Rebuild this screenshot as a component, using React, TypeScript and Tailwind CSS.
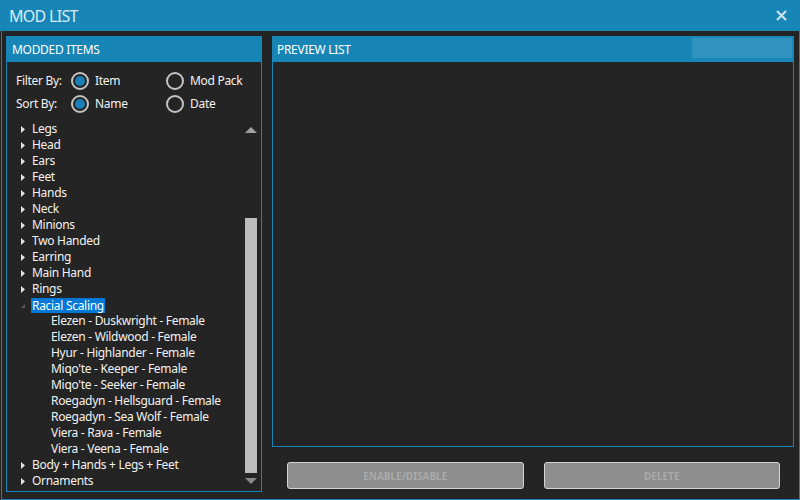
import React from 'react';

const BLUE = 'bg-[#1785b6]';

type RadioProps = { checked: boolean; label: string };

const Radio = ({ checked, label }: RadioProps) => (
  <div className="flex items-center gap-[6px]">
    <span className="flex h-[18px] w-[18px] shrink-0 items-center justify-center rounded-full border-2 border-[#c4c4c4]">
      {checked && <span className="h-[10px] w-[10px] rounded-full bg-[#1a7fb6]" />}
    </span>
    <span>{label}</span>
  </div>
);

const Collapsed = () => (
  <svg width="4" height="7" viewBox="0 0 4 7" className="shrink-0">
    <polygon points="0,0 4,3.5 0,7" fill="#e4e4e4" />
  </svg>
);

const Expanded = () => (
  <svg width="4" height="7" viewBox="0 0 4 7" className="shrink-0">
    <polygon points="4,2 4,6 0,6" fill="#5c5c5c" />
  </svg>
);

const topItems = ['Legs', 'Head', 'Ears', 'Feet', 'Hands', 'Neck', 'Minions', 'Two Handed', 'Earring', 'Main Hand', 'Rings'];

const racial = [
  'Elezen - Duskwright - Female',
  'Elezen - Wildwood - Female',
  'Hyur - Highlander - Female',
  "Miqo'te - Keeper - Female",
  "Miqo'te - Seeker - Female",
  'Roegadyn - Hellsguard - Female',
  'Roegadyn - Sea Wolf - Female',
  'Viera - Rava - Female',
  'Viera - Veena - Female',
];

const bottomItems = ['Body + Hands + Legs + Feet', 'Ornaments'];

const TreeRow = ({ label }: { label: string }) => (
  <div className="flex h-4 items-center gap-[7px] pl-[14px]">
    <Collapsed />
    <span>{label}</span>
  </div>
);

export default function App() {
  return (
    <div className="flex h-[500px] w-[800px] flex-col bg-[#242424] font-['Noto_Sans',sans-serif] text-[12px] leading-4 tracking-[-0.3px] text-[#f2f2f2]">
      {/* title bar */}
      <div className={`flex h-[31px] shrink-0 items-center justify-between pl-[9px] pr-[13px] ${BLUE}`}>
        <span className="text-[16px] tracking-[-0.7px] text-[#dcedf6]">MOD LIST</span>
        <svg width="11" height="11" viewBox="0 0 11 11">
          <path d="M1 1 L10 10 M10 1 L1 10" stroke="#cfe6f2" strokeWidth="2" />
        </svg>
      </div>

      <div className="ml-[1px] flex min-h-0 flex-1 gap-[10px] border-x border-b border-[#1785b6] pb-[7px] pl-[4px] pr-[5px] pt-[5px]">
        {/* left panel */}
        <div className="flex w-[256px] shrink-0 flex-col border border-[#1785b6] bg-[#242424]">
          <div className={`flex h-[25px] shrink-0 items-center pl-[5px] text-white ${BLUE}`}>MODDED ITEMS</div>

          <div className="grid grid-cols-[55px_95px_1fr] grid-rows-[18px_18px] items-center gap-y-[5px] pl-[9px] pt-[10px]">
            <span>Filter By:</span>
            <Radio checked label="Item" />
            <Radio checked={false} label="Mod Pack" />
            <span>Sort By:</span>
            <Radio checked label="Name" />
            <Radio checked={false} label="Date" />
          </div>

          <div className="mt-[8px] flex min-h-0 flex-1">
            <div className="flex-1">
              {topItems.map((t) => (
                <TreeRow key={t} label={t} />
              ))}
              <div className="flex h-4 items-center gap-[6px] pl-[14px]">
                <Expanded />
                <span className="bg-[#0078d7] px-[1px] leading-[15px] text-white">Racial Scaling</span>
              </div>
              {racial.map((r) => (
                <div key={r} className="h-4 pl-[44px]">
                  {r}
                </div>
              ))}
              {bottomItems.map((t) => (
                <TreeRow key={t} label={t} />
              ))}
            </div>

            {/* scrollbar */}
            <div className="mr-[4px] flex w-[12px] flex-col items-center">
              <svg width="12" height="6" viewBox="0 0 12 6" className="mt-[6px]">
                <polygon points="6,0 12,6 0,6" fill="#a0a0a0" />
              </svg>
              <div className="mt-[85px] h-[255px] w-[12px] bg-[#bdbdbd]" />
              <svg width="12" height="6" viewBox="0 0 12 6" className="mt-[5px]">
                <polygon points="0,0 12,0 6,6" fill="#8a8a8a" />
              </svg>
            </div>
          </div>
        </div>

        {/* right column */}
        <div className="flex min-w-0 flex-1 flex-col">
          <div className="flex h-[411px] flex-col border border-[#1785b6] bg-[#242424]">
            <div className={`flex h-[25px] shrink-0 items-start justify-between ${BLUE}`}>
              <span className="pl-[4px] leading-[25px] text-white">PREVIEW LIST</span>
              <div className="mr-[1px] mt-[1px] h-[20px] w-[100px] bg-[#3093c0]" />
            </div>
          </div>

          <div className="mt-[15px] grid grid-cols-2 gap-[20px] pl-[15px] pr-[14px]">
            <button className="h-[27px] rounded-[3px] border border-[#d4d4d4] bg-[#8e8e8e] text-[10px] font-bold tracking-normal text-[#aaaaaa]">
              ENABLE/DISABLE
            </button>
            <button className="h-[27px] rounded-[3px] border border-[#d4d4d4] bg-[#8e8e8e] text-[10px] font-bold tracking-normal text-[#aaaaaa]">
              DELETE
            </button>
          </div>
        </div>
      </div>
    </div>
  );
}
